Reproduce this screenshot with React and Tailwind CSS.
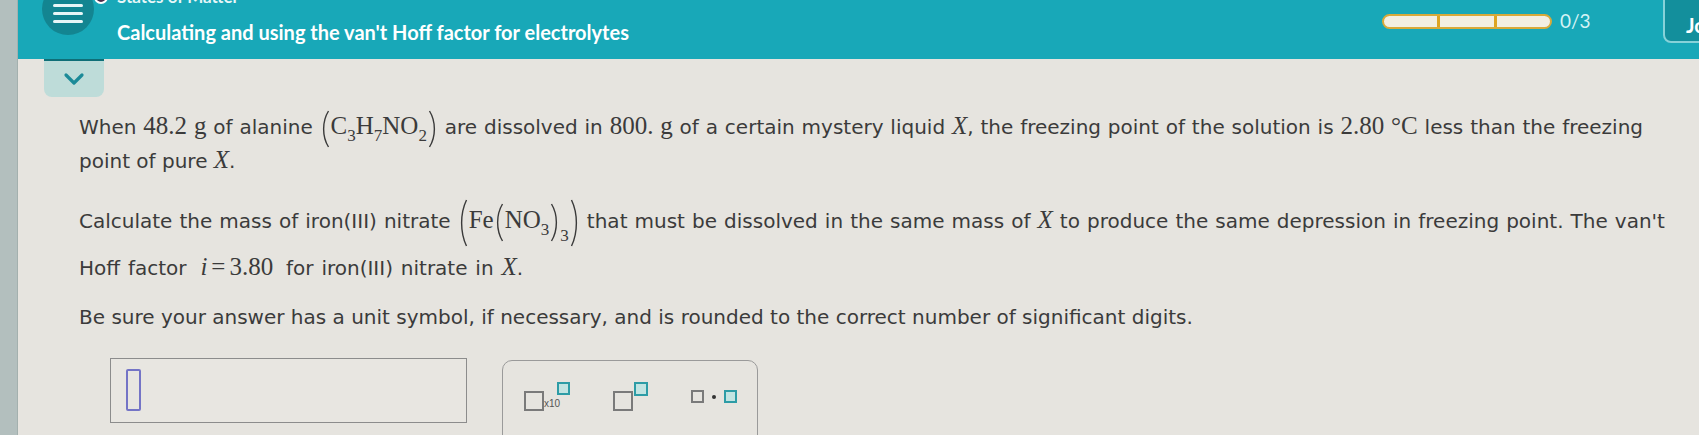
import React from "react";

const SANS = "font-['DejaVu_Sans',Verdana,sans-serif]";

function Paren({ h = 36, right = false, m = 8 }) {
  const w = 11;
  const d = right
    ? `M2.5 1 C9 ${h * 0.3} 9 ${h * 0.7} 2.5 ${h - 1}`
    : `M8.5 1 C2 ${h * 0.3} 2 ${h * 0.7} 8.5 ${h - 1}`;
  return (
    <svg
      width={w}
      height={h}
      viewBox={`0 0 ${w} ${h}`}
      className="inline-block align-middle"
      style={{ marginTop: -m, marginBottom: -m }}
    >
      <path d={d} fill="none" stroke="#3a3a3a" strokeWidth="1.4" />
    </svg>
  );
}

function M({ children, it, cls = "" }) {
  return (
    <span
      className={`font-['Liberation_Serif',serif] text-[25px] ${it ? "italic" : ""} ${cls}`}
    >
      {children}
    </span>
  );
}

function Sub({ children, off = "align-[-7px]" }) {
  return (
    <span className={`font-['Liberation_Serif',serif] text-[17px] ${off}`}>
      {children}
    </span>
  );
}

function Chevron() {
  return (
    <svg width="22" height="14" viewBox="0 0 22 14">
      <path
        d="M3 3 L11 11 L19 3"
        fill="none"
        stroke="#1b8a98"
        strokeWidth="3.2"
        strokeLinecap="round"
        strokeLinejoin="round"
      />
    </svg>
  );
}

export default function App() {
  return (
    <div className="flex h-[435px] w-[1699px] overflow-hidden bg-[#e6e4df]">
      <div className="w-[18px] shrink-0 bg-[#b3bfbe] border-r border-[#a3b0ae]" />
      <div className="flex flex-1 flex-col min-w-0">
        {/* header */}
        <div className="flex h-[59px] shrink-0 bg-[#18a8b8] overflow-hidden">
          <div className="ml-[24px] -mt-[17px] flex h-[52px] w-[52px] shrink-0 flex-col items-center justify-end gap-[5px] rounded-full bg-[#138591] pb-[12px]">
            <div className="h-[3px] w-[30px] rounded bg-[#e8f6f7]" />
            <div className="h-[3px] w-[30px] rounded bg-[#e8f6f7]" />
            <div className="h-[3px] w-[30px] rounded bg-[#e8f6f7]" />
          </div>
          <div className="flex flex-col">
            <div className="-mt-[11px] flex h-[16px] items-center gap-[9px]">
              <div className="h-[14px] w-[14px] rounded-full border-2 border-white bg-[#4a2a4a]" />
              <span className="font-['Lato',sans-serif] text-[17px] font-bold text-[#e8f7f8]">
                States of Matter
              </span>
            </div>
            <div className="ml-[23px] mt-[16px] font-['Lato',sans-serif] text-[20px] font-bold leading-[22px] text-white whitespace-nowrap">
              Calculating and using the van't Hoff factor for electrolytes
            </div>
          </div>
          <div className="flex-1" />
          <div className="mt-[14px] flex h-[15px] w-[170px] shrink-0 overflow-hidden rounded-full border-2 border-[#d8aa3a] bg-[#f3efe2]">
            <div className="flex-1" />
            <div className="w-[3px] bg-[#dea523]" />
            <div className="flex-1" />
            <div className="w-[3px] bg-[#dea523]" />
            <div className="flex-1" />
          </div>
          <div className="ml-[8px] mt-[10px] w-[103px] shrink-0 font-['Lato',sans-serif] text-[19px] leading-[22px] text-[#d4f3f5]">
            0/3
          </div>
          <div className="-mr-[24px] -mt-[4px] flex h-[47px] w-[60px] shrink-0 rounded-bl-[8px] border-2 border-[#86d2d9] bg-[#138f9c] pl-[21px] pt-[12px] font-['Lato',sans-serif] text-[20px] font-bold text-white">
            Jo
          </div>
        </div>

        {/* content */}
        <div className="flex flex-col">
          <div className="ml-[26px] flex h-[38px] w-[60px] items-center justify-center rounded-b-[8px] border-t-2 border-[#0f6f78] bg-[#bedcd9]">
            <Chevron />
          </div>

          <div className={`pl-[61px] ${SANS} text-[20px] text-[#3b3b3b] whitespace-nowrap`}>
            <div className="mt-[12px] h-[34px] leading-[34px] [word-spacing:0.5px]">
              When <M>48.2</M> <M>g</M> of alanine <Paren h={38} />
              <M>C</M>
              <Sub>3</Sub>
              <M>H</M>
              <Sub>7</Sub>
              <M>NO</M>
              <Sub>2</Sub>
              <Paren h={38} right /> are dissolved in <M>800.</M> <M>g</M> of a
              certain mystery liquid <M it>X</M>, the freezing point of the
              solution is <M>2.80</M> <M>°C</M> less than the freezing
            </div>
            <div className="h-[34px] leading-[34px]">
              point of pure <M it>X</M>.
            </div>

            <div className="mt-[26px] h-[34px] leading-[34px] [word-spacing:0.7px]">
              Calculate the mass of iron(III) nitrate <Paren h={48} m={12} />
              <M>Fe</M>
              <Paren h={39} />
              <M>NO</M>
              <Sub>3</Sub>
              <Paren h={39} right />
              <Sub off="align-[-13px]">3</Sub>
              <Paren h={48} right m={12} /> that must be dissolved in the same
              mass of <M it>X</M> to produce the same depression in freezing
              point. The van't
            </div>
            <div className="mt-[13px] h-[34px] leading-[34px] [word-spacing:1.5px]">
              Hoff factor <M it cls="ml-[6px]">i</M>
              <span className="mx-[4px]">
                <M>=</M>
              </span>
              <M cls="mr-[5px]">3.80</M> for iron(III) nitrate in <M it>X</M>.
            </div>

            <div className="mt-[16px] h-[34px] leading-[34px]">
              Be sure your answer has a unit symbol, if necessary, and is
              rounded to the correct number of significant digits.
            </div>
          </div>

          <div className="mt-[24px] flex items-start pl-[92px]">
            <div className="h-[65px] w-[357px] shrink-0 border border-[#8c8c8c] bg-[#e8e6e1] pl-[15px] pt-[10px]">
              <div className="h-[42px] w-[15px] rounded-[2px] border-2 border-[#7474c6]" />
            </div>
            <div className="ml-[35px] mt-[2px] flex h-[100px] w-[256px] shrink-0 items-start rounded-t-[10px] border border-[#9a9a9a] pl-[21px] pt-[21px]">
              {/* x10 */}
              <div className="flex h-[30px] items-start">
                <div className="mt-[9px] h-[20px] w-[20px] border-2 border-[#7a7a7a]" />
                <div className="mt-[17px] font-['Liberation_Sans',sans-serif] text-[10px] leading-[10px] text-[#555]">
                  x10
                </div>
                <div className="-ml-[3px] h-[13px] w-[13px] border-2 border-[#2d9ca6] bg-[#c2e4e2]" />
              </div>
              {/* power */}
              <div className="ml-[43px] flex h-[30px] items-start">
                <div className="mt-[9px] h-[20px] w-[20px] border-2 border-[#7a7a7a]" />
                <div className="ml-[1px] h-[14px] w-[14px] border-2 border-[#2d9ca6] bg-[#c2e4e2]" />
              </div>
              {/* dot */}
              <div className="ml-[43px] mt-[8px] flex items-center">
                <div className="h-[13px] w-[13px] border-2 border-[#7a7a7a]" />
                <div className="ml-[8px] h-[4px] w-[4px] rounded-full bg-[#333]" />
                <div className="ml-[8px] h-[13px] w-[13px] border-2 border-[#2d9ca6] bg-[#c2e4e2]" />
              </div>
            </div>
          </div>
        </div>
      </div>
    </div>
  );
}
